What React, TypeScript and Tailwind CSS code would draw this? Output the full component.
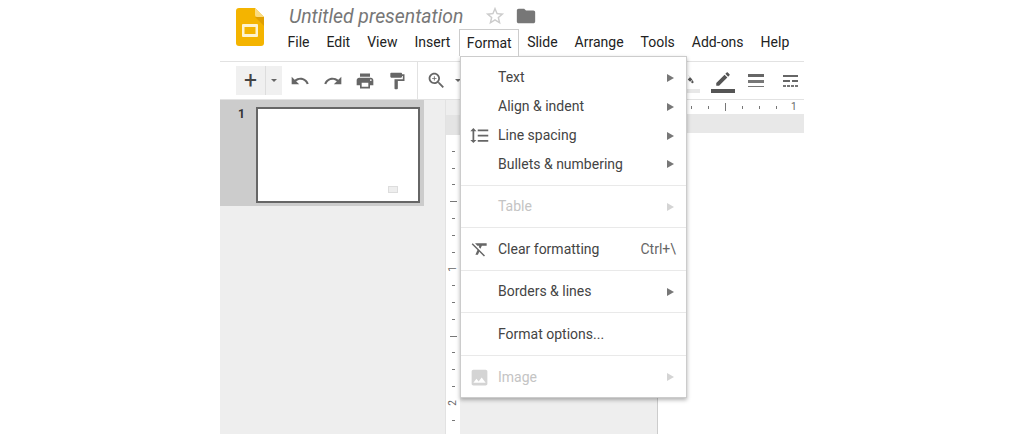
import React from "react";

const menuBar = ["File", "Edit", "View", "Insert", "Format", "Slide", "Arrange", "Tools", "Add-ons", "Help"];

function Icon({ d, className }: { d: string; className?: string }) {
  return (
    <svg viewBox="0 0 24 24" className={className} fill="currentColor">
      <path d={d} />
    </svg>
  );
}

const paths = {
  undo: "M12.5 8c-2.65 0-5.05.99-6.9 2.6L2 7v9h9l-3.62-3.62c1.39-1.16 3.16-1.88 5.12-1.88 3.54 0 6.55 2.31 7.6 5.5l2.37-.78C21.08 11.03 17.15 8 12.5 8z",
  redo: "M18.4 10.6C16.55 8.99 14.15 8 11.5 8c-4.65 0-8.58 3.03-9.96 7.22L3.9 16c1.05-3.19 4.05-5.5 7.6-5.5 1.95 0 3.73.72 5.12 1.88L13 16h9V7l-3.6 3.6z",
  print: "M19 8H5c-1.66 0-3 1.34-3 3v6h4v4h12v-4h4v-6c0-1.66-1.34-3-3-3zm-3 11H8v-5h8v5zm3-7c-.55 0-1-.45-1-1s.45-1 1-1 1 .45 1 1-.45 1-1 1zm-1-9H6v4h12V3z",
  paint: "M18 4V3c0-.55-.45-1-1-1H5c-.55 0-1 .45-1 1v4c0 .55.45 1 1 1h12c.55 0 1-.45 1-1V6h1v4H9v11c0 .55.45 1 1 1h2c.55 0 1-.45 1-1v-9h8V4h-3z",
  zoom: "M15.5 14h-.79l-.28-.27C15.41 12.59 16 11.11 16 9.5 16 5.91 13.09 3 9.5 3S3 5.91 3 9.5 5.91 16 9.5 16c1.61 0 3.09-.59 4.23-1.57l.27.28v.79l5 4.99L20.49 19l-4.99-5zm-6 0C7.01 14 5 11.99 5 9.5S7.01 5 9.5 5 14 7.01 14 9.5 11.99 14 9.5 14zm2.5-4h-2v2H9v-2H7V9h2V7h1v2h2v1z",
  folder: "M10 4H4c-1.1 0-1.99.9-1.99 2L2 18c0 1.1.9 2 2 2h16c1.1 0 2-.9 2-2V8c0-1.1-.9-2-2-2h-8l-2-2z",
  star: "M22 9.24l-7.19-.62L12 2 9.19 8.63 2 9.24l5.46 4.73L5.82 21 12 17.27 18.18 21l-1.63-7.03L22 9.24zM12 15.4l-3.76 2.27 1-4.28-3.32-2.88 4.38-.38L12 6.1l1.71 4.04 4.38.38-3.32 2.88 1 4.28L12 15.4z",
  pencil: "M3 17.25V21h3.75L17.81 9.94l-3.75-3.75L3 17.25zM20.71 7.04c.39-.39.39-1.02 0-1.41l-2.34-2.34c-.39-.39-1.02-.39-1.41 0l-1.83 1.83 3.75 3.75 1.83-1.83z",
  spacing: "M6 7h2.5L5 3.5 1.5 7H4v10H1.5L5 20.5 8.5 17H6V7zm4-2v2h12V5H10zm0 14h12v-2H10v2zm0-6h12v-2H10v2z",
  clear: "M3.27 5L2 6.27l6.97 6.97L6.5 19h3l1.57-3.66L16.73 21 18 19.73 3.55 5.27 3.27 5zM6 5v.18L8.82 8h2.4l-.72 1.68 2.1 2.1L14.21 8H20V5H6z",
  image: "M21 19V5c0-1.1-.9-2-2-2H5c-1.1 0-2 .9-2 2v14c0 1.1.9 2 2 2h14c1.1 0 2-.9 2-2zM8.5 13.5l2.5 3.01L14.5 12l4.5 6H5l3.5-4.5z",
};

function Arrow({ off }: { off?: boolean }) {
  return <span className={`ml-auto mr-[12px] h-0 w-0 border-y-[4px] border-l-[7px] border-y-transparent ${off ? "border-l-[#d4d4d4]" : "border-l-[#777]"}`} />;
}

function Row({ label, icon, off, hint, h, noArrow }: { label: string; icon?: React.ReactNode; off?: boolean; hint?: string; h: string; noArrow?: boolean }) {
  return (
    <div className={`flex items-center ${h} ${off ? "text-[#c4c4c4]" : "text-[#444]"}`}>
      <div className="flex w-[37px] justify-center">{icon}</div>
      <span>{label}</span>
      {hint ? <span className="ml-auto mr-[10px] text-[#666]">{hint}</span> : noArrow ? null : <Arrow off={off} />}
    </div>
  );
}

function Divider() {
  return <div className="h-px bg-[#e9e9e9]" />;
}

function FormatMenu() {
  return (
    <div className="absolute left-[240px] top-[56px] z-20 h-[342px] w-[227px] border border-[#ccc] bg-white pt-[6px] shadow-[0_2px_4px_rgba(0,0,0,0.3)]">
      <Row label="Text" h="h-[29px]" />
      <Row label="Align & indent" h="h-[29px]" />
      <Row label="Line spacing" h="h-[29px]" icon={<Icon d={paths.spacing} className="h-[21px] w-[21px] text-[#666]" />} />
      <Row label="Bullets & numbering" h="h-[28px]" />
      <div className="h-[7px]" />
      <Divider />
      <Row label="Table" h="h-[41px]" off />
      <Divider />
      <Row label="Clear formatting" h="h-[42px]" hint="Ctrl+\" icon={<Icon d={paths.clear} className="h-[20px] w-[20px] text-[#666]" />} />
      <Divider />
      <Row label="Borders & lines" h="h-[41px]" />
      <Divider />
      <Row label="Format options..." h="h-[42px]" noArrow />
      <Divider />
      <Row label="Image" h="h-[42px]" off icon={<Icon d={paths.image} className="h-[21px] w-[21px] text-[#d4d4d4]" />} />
    </div>
  );
}

function Logo() {
  return (
    <svg viewBox="0 0 28 38" className="mt-px h-[38px] w-[28px] shrink-0">
      <path d="M3 0h16l9 9v26a3 3 0 0 1-3 3H3a3 3 0 0 1-3-3V3a3 3 0 0 1 3-3z" fill="#f4b400" />
      <path d="M19 0l9 9h-7a2 2 0 0 1-2-2z" fill="#fadb80" />
      <path d="M19 9l9 9V9z" fill="#e09f00" />
      <path d="M7 16h14a1 1 0 0 1 1 1v11a1 1 0 0 1-1 1H7a1 1 0 0 1-1-1V17a1 1 0 0 1 1-1zm1.500 3v7h11v-7z" fill="#fdf3d0" />
    </svg>
  );
}

function Toolbar() {
  return (
    <div className="flex h-[38px] shrink-0 items-center border-b border-[#e2e2e2] pl-4 text-[#666]">
      <div className="flex h-[29px] w-[46px] shrink-0 items-center bg-[#f0f0f0]">
        <span className="w-[29px] text-center text-[23px] leading-none text-[#444]">+</span>
        <div className="flex h-full flex-1 items-center justify-center border-l border-[#ddd]">
          <span className="h-0 w-0 border-x-[3px] border-t-[3px] border-x-transparent border-t-[#666]" />
        </div>
      </div>
      <div className="ml-[8px] flex shrink-0 items-center gap-[13px]">
        <Icon d={paths.undo} className="h-[20px] w-[20px]" />
        <Icon d={paths.redo} className="h-[20px] w-[20px]" />
        <Icon d={paths.print} className="-ml-[1px] h-[20px] w-[20px]" />
        <Icon d={paths.paint} className="-ml-[1px] h-[20px] w-[20px]" />
      </div>
      <div className="ml-[10px] h-[38px] w-px shrink-0 bg-[#e2e2e2]" />
      <Icon d={paths.zoom} className="ml-[8px] h-[21px] w-[21px] shrink-0" />
      <span className="ml-[8px] h-0 w-0 shrink-0 border-x-[3px] border-t-[3px] border-x-transparent border-t-[#666]" />
      {/* right side, mostly hidden under the open menu */}
      <div className="ml-[225px] flex h-[24px] w-[14px] shrink-0 flex-col justify-end">
        <Icon d="M3 3l8 8-4 4-4-4 4-4zM11 12s2 2.2 2 3.4a2 2 0 0 1-4 0C9 14.200 11 12 11 12z" className="h-[14px] w-[14px] text-[#555]" />
        <div className="mt-[2px] h-[4px] bg-[#e8e8e8]" />
      </div>
      <div className="ml-[11px] flex h-[24px] w-[24px] shrink-0 flex-col items-center justify-between">
        <Icon d={paths.pencil} className="mt-px h-[18px] w-[18px] text-[#555]" />
        <div className="h-[4px] w-full bg-[#555]" />
      </div>
      <div className="ml-[13px] flex w-[16px] shrink-0 flex-col gap-[3px]">
        <div className="h-[3px] bg-[#666]" />
        <div className="h-[3px] bg-[#777]" />
        <div className="h-px bg-[#777]" />
      </div>
      <div className="ml-[19px] flex w-[15px] shrink-0 flex-col gap-[3px]">
        <div className="h-[2px] bg-[#666]" />
        <div className="flex gap-[2px]">
          <div className="h-[2px] flex-1 bg-[#666]" />
          <div className="h-[2px] flex-1 bg-[#666]" />
        </div>
        <div className="flex gap-[1px]">
          <div className="h-[2px] flex-1 bg-[#777]" />
          <div className="h-[2px] flex-1 bg-[#777]" />
          <div className="h-[2px] flex-1 bg-[#777]" />
          <div className="h-[2px] flex-1 bg-[#777]" />
        </div>
      </div>
    </div>
  );
}

const sideTicks = ["s", "s", "s", "l", "s", "s", "s", "1", "s", "s", "s", "l", "s", "s", "s", "2", "s", "s"];

function SideRuler() {
  return (
    <div className="flex w-[15px] shrink-0 flex-col overflow-hidden border-l border-[#e2e2e2]">
      <div className="h-[15px] shrink-0 bg-[#eeeeee]" />
      <div className="h-[20px] shrink-0 bg-[#e4e4e4]" />
      <div className="flex min-h-0 flex-1 flex-col items-center bg-white pt-[8px]">
        {sideTicks.map((t, i) => (
          <div key={i} className="flex h-[16.800px] w-full shrink-0 items-center justify-center text-[10px] leading-none text-[#666]">
            {t === "s" && <div className="h-px w-[3px] bg-[#777]" />}
            {t === "l" && <div className="h-px w-[7px] bg-[#777]" />}
            {(t === "1" || t === "2") && <span className="-rotate-90">{t}</span>}
          </div>
        ))}
      </div>
    </div>
  );
}

export default function App() {
  return (
    <div className="flex h-[434px] w-[1024px] justify-center overflow-hidden bg-white text-[14px] [font-family:Roboto,'Liberation_Sans',sans-serif]">
      <div className="relative flex h-full w-[584px] flex-col">
        <div className="flex h-[62px] shrink-0 border-b border-[#e2e2e2] pl-4 pt-[7px]">
          <Logo />
          <div className="ml-[25px] flex flex-col">
            <div className="flex h-[17px] items-center">
              <span className="mt-[2px] text-[19.400px] italic leading-none text-[#777]">Untitled presentation</span>
              <Icon d={paths.star} className="ml-[21px] h-[22px] w-[22px] text-[#ccc]" />
              <Icon d={paths.folder} className="ml-[9px] h-[22px] w-[22px] text-[#777]" />
            </div>
            <div className="-ml-[10px] mt-[5px] flex h-[26px]">
              {menuBar.map((m) =>
                m === "Format" ? (
                  <div key={m} className="relative z-30 flex h-[27px] items-center border border-b-0 border-[#ccc] bg-white pl-[7px] pr-[6px] text-[#222]">
                    {m}
                  </div>
                ) : (
                  <div key={m} className="flex items-center px-[8.500px] text-[#222]">
                    {m}
                  </div>
                )
              )}
            </div>
          </div>
        </div>
        <Toolbar />
        <div className="flex min-h-0 flex-1">
          <div className="w-[225px] shrink-0 bg-[#eeeeee]">
            <div className="flex h-[106px] w-[204px] bg-[#cccccc] pt-[7px]">
              <span className="w-[36px] pr-[11px] text-right text-[12px] font-bold leading-[14px] text-[#333]">1</span>
              <div className="relative h-[96px] w-[164px] border-[2.500px] border-[#666] bg-white">
                <div className="absolute bottom-[8px] right-[20px] h-[7px] w-[10px] border border-[#ddd] bg-[#eee]" />
              </div>
            </div>
          </div>
          <SideRuler />
          <div className="flex min-w-0 flex-1 flex-col">
            <div className="flex h-[14px] shrink-0 items-center bg-white pl-[231px] text-[10px] leading-none text-[#666]">
              <div className="flex w-[113px] items-center">
                <div className="w-[17px]"><div className="h-[3px] w-px bg-[#777]" /></div>
                <div className="w-[17px]"><div className="h-[3px] w-px bg-[#777]" /></div>
                <div className="w-[17px]"><div className="h-[8px] w-px bg-[#777]" /></div>
                <div className="w-[17px]"><div className="h-[3px] w-px bg-[#777]" /></div>
                <div className="w-[17px]"><div className="h-[3px] w-px bg-[#777]" /></div>
                <div className="w-[17px]"><div className="h-[3px] w-px bg-[#777]" /></div>
                <span className="-ml-[2px]">1</span>
              </div>
            </div>
            <div className="h-[19px] shrink-0 bg-[#e8e8e8]" />
            <div className="flex min-h-0 flex-1">
              <div className="w-[198px] border-r border-[#ccc] bg-[#eeeeee]" />
            </div>
          </div>
        </div>
        <FormatMenu />
      </div>
    </div>
  );
}
